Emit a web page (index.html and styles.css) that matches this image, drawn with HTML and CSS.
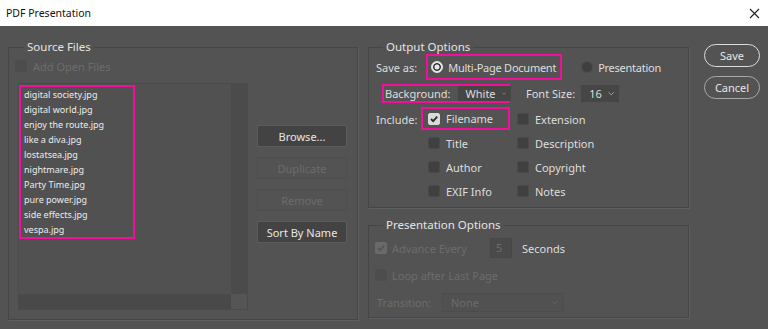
FILE: index.html
```html
<!DOCTYPE html>
<html lang="en">
<head>
<meta charset="UTF-8">
<title>PDF Presentation</title>
<link rel="stylesheet" href="styles.css">
</head>
<body>

<header class="titlebar">
    <span class="title">PDF Presentation</span>
    <svg class="close" width="11" height="11" viewBox="0 0 11 11"><path d="M1 1 L10 10 M10 1 L1 10" stroke="#222" stroke-width="1.1" fill="none"/></svg>
</header>

<div class="dialog">
    <fieldset class="group source">
        <legend>Source Files</legend>
        <div class="row add-open disabled">
            <span class="cb"></span>
            <span>Add Open Files</span>
        </div>
        <div class="files-row">
            <div class="filelist">
                <div class="items">
                    <ul class="hl files">
                        <li>digital society.jpg</li>
                        <li>digital world.jpg</li>
                        <li>enjoy the route.jpg</li>
                        <li>like a diva.jpg</li>
                        <li>lostatsea.jpg</li>
                        <li>nightmare.jpg</li>
                        <li>Party Time.jpg</li>
                        <li>pure power.jpg</li>
                        <li>side effects.jpg</li>
                        <li>vespa.jpg</li>
                    </ul>
                </div>
                <div class="vscroll"></div>
                <div class="hscroll"></div>
                <div class="corner"></div>
            </div>
            <div class="file-buttons">
                <button class="btn">Browse...</button>
                <button class="btn off">Duplicate</button>
                <button class="btn off">Remove</button>
                <button class="btn">Sort By Name</button>
            </div>
        </div>
    </fieldset>

    <div class="middle">
        <fieldset class="group output">
            <legend>Output Options</legend>
            <div class="row save-row">
                <span class="lbl">Save as:</span>
                <div class="hl save-choice">
                    <span class="radio on"></span>
                    <span class="tight">Multi-Page Document</span>
                </div>
                <div class="pres-choice">
                    <span class="radio"></span>
                    <span class="tight">Presentation</span>
                </div>
            </div>
            <div class="row bg-row">
                <div class="hl bg-choice">
                    <span>Background:</span>
                    <span class="select bg-select">White <svg width="7" height="5" viewBox="0 0 7 5"><path d="M0.5 1 L3.5 4 L6.5 1" stroke="#aaa" fill="none"/></svg></span>
                </div>
                <span class="lbl font-lbl">Font Size:</span>
                <span class="select size-select">16 <svg width="7" height="5" viewBox="0 0 7 5"><path d="M0.5 1 L3.5 4 L6.5 1" stroke="#aaa" fill="none"/></svg></span>
            </div>
            <div class="include">
                <span class="lbl inc-lbl">Include:</span>
                <div class="hl opt first"><span class="cb on"><svg width="10" height="10" viewBox="0 0 10 10"><path d="M2 5 L4.2 7.2 L8.2 2.6" stroke="#2b2b2b" stroke-width="1.8" fill="none"/></svg></span>Filename</div>
                <div class="opt"><span class="cb"></span>Extension</div>
                <span></span>
                <div class="opt"><span class="cb"></span>Title</div>
                <div class="opt"><span class="cb"></span>Description</div>
                <span></span>
                <div class="opt"><span class="cb"></span>Author</div>
                <div class="opt"><span class="cb"></span>Copyright</div>
                <span></span>
                <div class="opt"><span class="cb"></span>EXIF Info</div>
                <div class="opt"><span class="cb"></span>Notes</div>
            </div>
        </fieldset>

        <fieldset class="group presentation">
            <legend>Presentation Options</legend>
            <div class="row pres-row">
                <span class="cb on dim"><svg width="10" height="10" viewBox="0 0 10 10"><path d="M2 5 L4.2 7.2 L8.2 2.6" stroke="#555" stroke-width="1.8" fill="none"/></svg></span>
                <span class="disabled advance">Advance Every</span>
                <span class="numbox">5</span>
                <span class="seconds">Seconds</span>
            </div>
            <div class="row pres-row">
                <span class="cb dim"></span>
                <span class="disabled">Loop after Last Page</span>
            </div>
            <div class="row pres-row">
                <span class="disabled trans-lbl">Transition:</span>
                <span class="select trans-select">None <svg width="7" height="5" viewBox="0 0 7 5"><path d="M0.5 1 L3.5 4 L6.5 1" stroke="#666" fill="none"/></svg></span>
            </div>
        </fieldset>
    </div>

    <div class="actions">
        <button class="pill primary">Save</button>
        <button class="pill">Cancel</button>
    </div>
</div>

</body>
</html>
```

FILE: styles.css
```css
body {
    margin: 0;
    height: 329px;
    background: #535353;
    font-family: "Noto Sans", "Open Sans", sans-serif;
    font-size: 11px;
    color: #dedede;
    white-space: nowrap;
    overflow: hidden;
}
.titlebar {
    height: 26px;
    background: #ffffff;
    display: flex;
    align-items: center;
    justify-content: space-between;
    padding: 0 8px 0 6px;
    box-sizing: border-box;
    color: #111;
    font-size: 10.5px;
}
.close {
    margin-top: 1px;
}

.dialog {
    display: flex;
    padding: 14px 0 0 8px;
}
.group {
    margin: 0;
    padding: 0;
    min-width: 0;
    border: 1px solid #464646;
    box-shadow: 1px 1px 0 #5f5f5f;
    box-sizing: border-box;
}
.group legend {
    padding: 0 3px;
    line-height: 14px;
    font-size: 11.5px;
    color: #e4e4e4;
}

.row {
    display: flex;
    align-items: center;
}
.tight {
    letter-spacing: -0.25px;
}
.disabled {
    color: #6c6c6c;
}
.cb {
    width: 12px;
    height: 12px;
    box-sizing: border-box;
    background: #404040;
    border: 1px solid #4a4a4a;
    border-radius: 2px;
    display: inline-flex;
    align-items: center;
    justify-content: center;
    flex: none;
}
.cb.on {
    background: #dadada;
    border-color: #dadada;
}
.cb.dim {
    background: #4d4d4d;
    border-color: #4d4d4d;
}
.cb.on.dim {
    background: #6a6a6a;
    border-color: #6a6a6a;
}
.radio {
    width: 12px;
    height: 12px;
    box-sizing: border-box;
    border-radius: 50%;
    background: #3f3f3f;
    border: 1px solid #4c4c4c;
    flex: none;
}
.radio.on {
    background: radial-gradient(circle, #e6e6e6 0 2.2px, #3a3a3a 2.8px 3.6px, #e6e6e6 4.2px);
    border-color: #e6e6e6;
}
.hl {
    border: 2px solid #f0109a;
    box-sizing: border-box;
}
.select {
    display: inline-flex;
    align-items: center;
    gap: 6px;
    background: #464646;
    padding: 0 5px 0 8px;
    box-sizing: border-box;
}

/* source files */
.source {
    width: 350px;
    height: 280px;
    padding: 5px 9px 0 9px;
}
.source legend {
    margin-left: 6px;
}
.add-open {
    height: 14px;
    gap: 6px;
    margin-left: -3px;
}
.add-open .cb {
    background: #4d4d4d;
    border-color: #4d4d4d;
}
.files-row {
    display: flex;
    margin-top: 10px;
}
.filelist {
    width: 230px;
    height: 227px;
    display: grid;
    grid-template-columns: 1fr 16px;
    grid-template-rows: 1fr 15px;
    background: #515151;
    border: 1px solid #4b4b4b;
    box-sizing: border-box;
}
.items {
    padding: 1px 0 0 0;
}
.files {
    list-style: none;
    margin: 0;
    padding: 0 0 0 3px;
    width: 116px;
    font-size: 9px;
    line-height: 15px;
    color: #ececec;
}
.vscroll {
    background: #4b4b4b;
}
.hscroll {
    background: #494949;
}
.corner {
    background: #555;
}
.file-buttons {
    margin-left: 9px;
    padding-top: 42px;
    display: flex;
    flex-direction: column;
    gap: 10px;
}
.btn {
    width: 90px;
    height: 22px;
    font: inherit;
    color: #e6e6e6;
    background: #434343;
    border: 1px solid #5c5c5c;
    padding: 0;
}
.btn.off {
    background: #535353;
    border-color: #4e4e4e;
    color: #6c6c6c;
}

/* middle column */
.middle {
    margin-left: 10px;
    width: 321px;
    display: flex;
    flex-direction: column;
    gap: 10px;
}
.output {
    height: 168px;
    padding: 0 0 0 7px;
}
.output legend {
    margin-left: 7px;
}
.save-row {
    height: 26px;
}
.save-choice {
    height: 26px;
    display: flex;
    align-items: center;
    gap: 5px;
    padding: 0 4px 0 3px;
    margin-left: 9px;
}
.pres-choice {
    display: flex;
    align-items: center;
    gap: 5px;
    margin-left: 19px;
}
.bg-row {
    margin-top: 4px;
    margin-left: 6px;
    height: 19px;
}
.bg-choice {
    height: 19px;
    width: 128px;
    display: flex;
    align-items: center;
    gap: 7px;
    padding-left: 1px;
}
.bg-select {
    width: 53px;
    height: 15px;
}
.font-lbl {
    margin-left: 16px;
}
.size-select {
    margin-left: 6px;
    width: 38px;
    height: 17px;
}
.include {
    margin-top: 4px;
    display: grid;
    grid-template-columns: 45px 89px 1fr;
    grid-auto-rows: 24px;
    align-items: center;
}
.include .opt {
    display: flex;
    align-items: center;
    gap: 6px;
    padding-left: 7px;
    height: 24px;
}
.include .opt.first {
    height: 23px;
    padding-left: 5px;
    align-self: start;
}

.presentation {
    height: 100px;
    padding: 6px 0 0 6px;
}
.presentation legend {
    margin-left: 8px;
}
.pres-row {
    height: 20px;
    gap: 5px;
    margin-bottom: 7px;
}
.advance {
    width: 93px;
}
.numbox {
    width: 22px;
    height: 20px;
    box-sizing: border-box;
    background: #4a4a4a;
    border: 1px solid #474747;
    color: #6c6c6c;
    padding-left: 5px;
    line-height: 18px;
}
.seconds {
    margin-left: 5px;
}
.trans-lbl {
    margin-left: 2px;
    width: 60px;
}
.trans-select {
    width: 122px;
    height: 19px;
    justify-content: space-between;
    background: #515151;
    border: 1px solid #4c4c4c;
    color: #6c6c6c;
}

/* right buttons */
.actions {
    margin-left: 15px;
    padding-top: 4px;
    display: flex;
    flex-direction: column;
    gap: 9px;
}
.pill {
    width: 56px;
    height: 23px;
    border-radius: 12px;
    background: #535353;
    border: 1.5px solid #a8a8a8;
    color: #e6e6e6;
    font: inherit;
    padding: 0;
}
.pill.primary {
    border-color: #dcdcdc;
}
```
